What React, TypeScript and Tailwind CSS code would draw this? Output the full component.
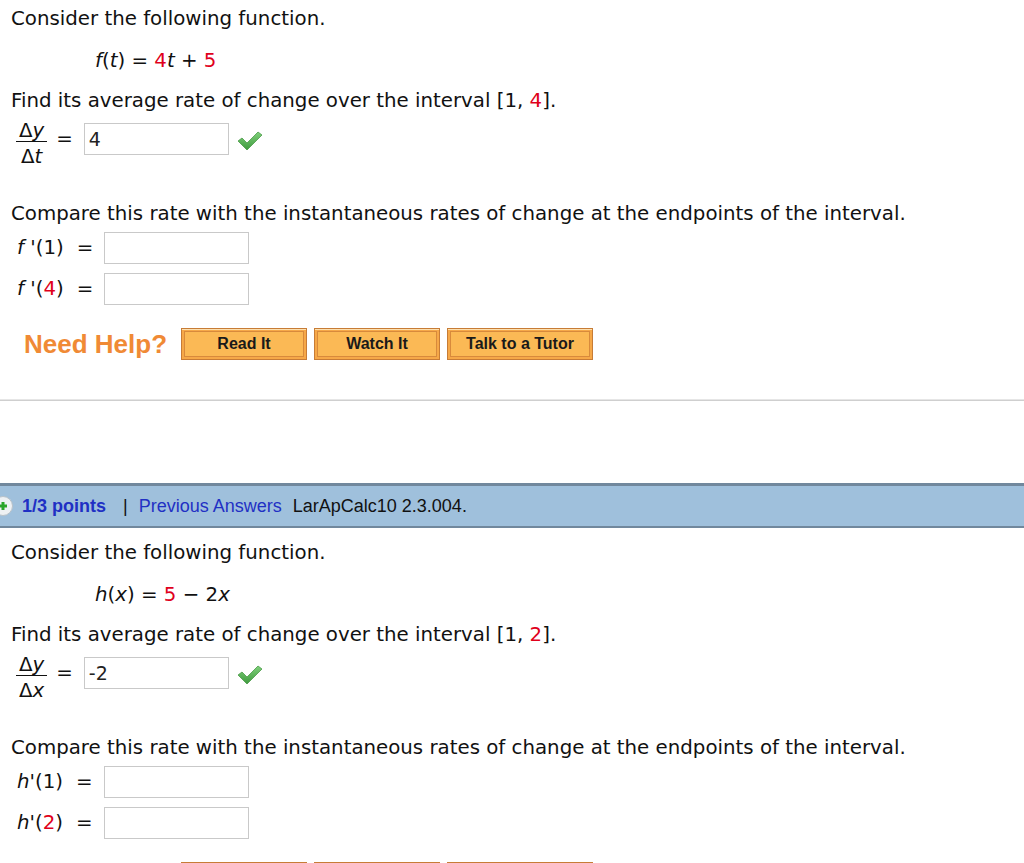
import React from "react";

const RED = "text-[#e0001b]";

function Check() {
  return (
    <svg width="26" height="22" viewBox="0 0 26 22" className="ml-[8px] mt-[10px]">
      <defs>
        <linearGradient id="cg" x1="0" y1="0" x2="0" y2="1">
          <stop offset="0" stopColor="#7fd07a" />
          <stop offset="1" stopColor="#3f9a3e" />
        </linearGradient>
      </defs>
      <path d="M1 11 L5 8 L10 13 L21 2 L25 5 L10 20 Z" fill="url(#cg)" stroke="#4a9a48" strokeWidth="0.8" strokeLinejoin="round" />
    </svg>
  );
}

function Box({ value, w = 145 }: { value?: string; w?: number }) {
  return (
    <div
      className="h-[32px] border border-[#c9c9c9] bg-white flex items-center pl-[4px] text-[19px] text-[#222]"
      style={{ width: w }}
    >
      {value}
    </div>
  );
}

function Btn({ label, w }: { label: string; w: number }) {
  return (
    <div
      className="h-[32px] border border-[#c77c36] bg-[#f6a848] p-[2px] shadow-[inset_0_1px_0_#fde0b0]"
      style={{ width: w }}
    >
      <div className="h-full w-full border border-[#d88a3c] bg-[#fbb955] flex items-center justify-center font-['Liberation_Sans',Arial,sans-serif] font-bold text-[16px] text-[#1a1a1a]">
        {label}
      </div>
    </div>
  );
}

type Q = {
  fn: React.ReactNode;
  interval: React.ReactNode;
  v: string;
  ans: string;
  d1: React.ReactNode;
  d2: React.ReactNode;
};

function Question({ fn, interval, v, ans, d1, d2 }: Q) {
  return (
    <div className="pl-[11px] text-[19.8px] text-[#111] font-['DejaVu_Sans',Verdana,sans-serif]">
      <div className="h-[36px] pt-[2px] flex items-center">Consider the following function.</div>
      <div className="mt-[6px] h-[36px] pt-[2px] flex items-center pl-[84px]">{fn}</div>
      <div className="mt-[4px] h-[36px] pt-[2px] flex items-center whitespace-pre">
        Find its average rate of change over the interval {interval}.
      </div>
      <div className="mt-[2px] h-[50px] flex items-start pl-[5px]">
        <div className="flex flex-col items-center">
          <div className="leading-[21px] border-b border-[#111] px-[3px]">
            Δ<i>y</i>
          </div>
          <div className="leading-[22px] pt-[4px]">
            Δ<i>{v}</i>
          </div>
        </div>
        <div className="ml-[9px] mt-[9px] leading-[20px]">=</div>
        <div className="ml-[11px] mt-[3px]">
          <Box value={ans} />
        </div>
        <Check />
      </div>
      <div className="mt-[25px] h-[36px] pt-[2px] flex items-center">
        Compare this rate with the instantaneous rates of change at the endpoints of the interval.
      </div>
      <div className="mt-[1px] h-[32px] flex items-center pl-[6px]">
        {d1}
        <span className="ml-[13px] mr-[11px]">=</span>
        <Box />
      </div>
      <div className="mt-[9px] h-[32px] flex items-center pl-[6px]">
        {d2}
        <span className="ml-[13px] mr-[11px]">=</span>
        <Box />
      </div>
      <div className="mt-[23px] h-[32px] flex items-center pl-[13px]">
        <span className="font-['Liberation_Sans',Arial,sans-serif] font-bold text-[26px] text-[#f08a35] w-[157px]">
          Need Help?
        </span>
        <div className="flex gap-[7px]">
          <Btn label="Read It" w={126} />
          <Btn label="Watch It" w={126} />
          <Btn label="Talk to a Tutor" w={146} />
        </div>
      </div>
    </div>
  );
}

export default function App() {
  return (
    <div className="w-[1024px] h-[863px] overflow-hidden bg-white relative">
      <Question
        fn={
          <span className="whitespace-pre">
            <i>f</i>(<i>t</i>) = <span className={RED}>4</span>
            <i>t</i> + <span className={RED}>5</span>
          </span>
        }
        interval={
          <span>
            [1, <span className={RED}>4</span>]
          </span>
        }
        v="t"
        ans="4"
        d1={
          <span>
            <i>f</i> '(1)
          </span>
        }
        d2={
          <span>
            <i>f</i> '(<span className={RED}>4</span>)
          </span>
        }
      />
      <div className="mt-[39px] h-[2px] bg-[#cfcfcf] border-t border-[#e6e6e6]" />
      <div className="mt-[82px] h-[45px] bg-[#9fc0dc] border-t-[3px] border-b-[2px] border-[#71889d] flex items-center relative font-['Liberation_Sans',Arial,sans-serif] text-[18px]">
        <div className="absolute left-[-7px] top-[10px] w-[20px] h-[20px] rounded-full bg-[#eef1f3] border border-[#b9c2c9] flex items-center justify-center">
          <svg width="10" height="10" viewBox="0 0 10 10">
            <path d="M5 1 V9 M1 5 H9" stroke="#2aa52a" strokeWidth="3" />
          </svg>
        </div>
        <span className="ml-[22px] font-bold text-[#1f30c4]">1/3 points</span>
        <span className="ml-[17px] text-[#111]">|</span>
        <span className="ml-[11px] text-[#1f30c4]">Previous Answers</span>
        <span className="ml-[11px] text-[#111]">LarApCalc10 2.3.004.</span>
      </div>
      <div className="mt-[6px]">
        <Question
          fn={
            <span className="whitespace-pre">
              <i>h</i>(<i>x</i>) = <span className={RED}>5</span> − 2<i>x</i>
            </span>
          }
          interval={
            <span>
              [1, <span className={RED}>2</span>]
            </span>
          }
          v="x"
          ans="-2"
          d1={
            <span>
              <i>h</i>'(1)
            </span>
          }
          d2={
            <span>
              <i>h</i>'(<span className={RED}>2</span>)
            </span>
          }
        />
      </div>
    </div>
  );
}
